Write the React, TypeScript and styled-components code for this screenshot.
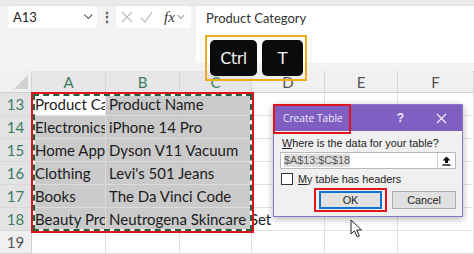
import React from 'react';
import styled, { createGlobalStyle } from 'styled-components';

const GlobalStyle = createGlobalStyle`
  html, body { margin: 0; padding: 0; }
  body {
    width: 474px;
    height: 254px;
    overflow: hidden;
    background: #f3f3f3;
    font-family: "Lato", "Liberation Sans", sans-serif;
  }
  * { box-sizing: border-box; }
`;

const GREEN = '#3b7d5e';
const RED = '#e0141c';

const colWidths = [32, 74, 74, 72, 73, 73, 76];
const colNames = ['A', 'B', 'C', 'D', 'E', 'F'];

const rows: [number, string, string][] = [
  [13, 'Product Category', 'Product Name'],
  [14, 'Electronics', 'iPhone 14 Pro'],
  [15, 'Home Appliances', 'Dyson V11 Vacuum'],
  [16, 'Clothing', "Levi's 501 Jeans"],
  [17, 'Books', 'The Da Vinci Code'],
  [18, 'Beauty Products', 'Neutrogena Skincare Set'],
  [19, '', ''],
];

const App: React.FC = () => {
  return (
    <Page>
      <GlobalStyle />
      <TopStrip />
      <Toolbar>
        <NameBox>
          <span>A13</span>
          <Chevron />
        </NameBox>
        <Dots>⋮</Dots>
        <FxBox>
          <svg width="12" height="12" viewBox="0 0 12 12">
            <path d="M1 1 L11 11 M11 1 L1 11" stroke="#bdbdbd" strokeWidth="1.3" fill="none" />
          </svg>
          <svg width="13" height="12" viewBox="0 0 13 12">
            <path d="M1 7 L5 11 L12 1" stroke="#bdbdbd" strokeWidth="1.3" fill="none" />
          </svg>
          <FxLabel>fx</FxLabel>
          <Chevron $small />
        </FxBox>
        <FormulaBox>Product Category</FormulaBox>
      </Toolbar>

      <Sheet>
        <Corner />
        {colNames.map((c, i) => (
          <ColHeader key={c} $sel={i < 3}>
            {c}
          </ColHeader>
        ))}
        {rows.map(([n, a, b]) => {
          const sel = n >= 13 && n <= 18;
          return (
            <React.Fragment key={n}>
              <RowHeader $sel={sel}>{n}</RowHeader>
              <Cell $sel={sel && n !== 13} $clip>
                {a}
              </Cell>
              <Cell $sel={sel} $noRight={!!b}>
                <CellText>{b}</CellText>
              </Cell>
              <Cell $sel={sel} $noRight={n === 18} />
              <Cell />
              <Cell />
              <Cell />
            </React.Fragment>
          );
        })}
        <AntsWhite />
        <AntsGreen />
        <RedFrame />
      </Sheet>

      <KeysBox>
        <Key $w={47}>Ctrl</Key>
        <Key $w={41}>T</Key>
      </KeysBox>

      <Dialog>
        <TitleBar>
          <TitleText>Create Table</TitleText>
          <TitleIcons>
            <span>?</span>
            <svg width="11" height="11" viewBox="0 0 11 11">
              <path d="M1 1 L10 10 M10 1 L1 10" stroke="#f2ecfb" strokeWidth="1.3" fill="none" />
            </svg>
          </TitleIcons>
          <TitleHighlight />
        </TitleBar>
        <DialogBody>
          <Label>
            <u>W</u>here is the data for your table?
          </Label>
          <RangeInput>
            <RangeText>$A$13:$C$18</RangeText>
            <PickButton>
              <svg width="9" height="10" viewBox="0 0 9 10">
                <path d="M4.5 0.5 L8.5 4.5 L6 4.5 L6 7 L3 7 L3 4.5 L0.5 4.5 Z" fill="#111" />
                <rect x="0.5" y="8.3" width="8" height="1.4" fill="#111" />
              </svg>
            </PickButton>
          </RangeInput>
          <CheckRow>
            <CheckBox />
            <span>
              <u>M</u>y table has headers
            </span>
          </CheckRow>
          <ButtonRow>
            <OkFrame>
              <Button $primary>OK</Button>
            </OkFrame>
            <Button>Cancel</Button>
          </ButtonRow>
        </DialogBody>
      </Dialog>

      <Cursor width="13" height="20" viewBox="0 0 13 20">
        <path
          d="M1 1 L1 15 L4.5 11.8 L7.2 18 L9.4 17 L6.8 11 L11.5 11 Z"
          fill="#fff"
          stroke="#222"
          strokeWidth="1"
          strokeLinejoin="round"
        />
      </Cursor>
    </Page>
  );
};

const Page = styled.div`
  position: relative;
  width: 474px;
  height: 254px;
  overflow: hidden;
  background: #f3f3f3;
`;

const TopStrip = styled.div`
  height: 6px;
  background: #e9e9e9;
  border-bottom: 1px solid #e2e2e2;
`;

const Toolbar = styled.div`
  display: flex;
  align-items: flex-start;
  height: 65px;
  padding-left: 8px;
`;

const NameBox = styled.div`
  width: 89px;
  height: 22px;
  background: #fff;
  border-radius: 4px;
  display: flex;
  align-items: center;
  justify-content: space-between;
  padding: 0 5px 0 5px;
  font-size: 13px;
  color: #222;
`;

const Chevron = styled.span<{ $small?: boolean }>`
  width: ${(p) => (p.$small ? 5 : 6)}px;
  height: ${(p) => (p.$small ? 5 : 6)}px;
  border-right: 1.3px solid ${(p) => (p.$small ? '#9a9a9a' : '#444')};
  border-bottom: 1.3px solid ${(p) => (p.$small ? '#9a9a9a' : '#444')};
  transform: rotate(45deg) translate(-2px, -1px);
`;

const Dots = styled.div`
  width: 19px;
  height: 22px;
  line-height: 22px;
  text-align: center;
  font-size: 14px;
  font-weight: 700;
  color: #555;
`;

const FxBox = styled.div`
  width: 75px;
  height: 22px;
  background: #fff;
  border-radius: 4px;
  display: flex;
  align-items: center;
  gap: 7px;
  padding-left: 5px;
`;

const FxLabel = styled.span`
  font-family: "Liberation Serif", "DejaVu Serif", serif;
  font-style: italic;
  font-size: 15px;
  color: #333;
  margin-left: 4px;
  margin-right: -3px;
`;

const FormulaBox = styled.div`
  flex: 1;
  height: 57px;
  margin-left: 5px;
  background: #fff;
  border-radius: 4px 0 0 4px;
  padding: 4px 0 0 10px;
  font-size: 13px;
  color: #333;
  line-height: 16px;
`;

const Sheet = styled.div`
  position: relative;
  display: grid;
  grid-template-columns: ${colWidths.map((w) => `${w}px`).join(' ')};
  grid-template-rows: 22px;
  grid-auto-rows: 23px;
  background: #fff;
`;

const Corner = styled.div`
  background: #f0f0f0;
  border-right: 1px solid #d4d4d4;
  border-bottom: 1px solid #cfcfcf;
  position: relative;
  &::after {
    content: '';
    position: absolute;
    right: 3px;
    bottom: 3px;
    width: 0;
    height: 0;
    border-left: 14px solid transparent;
    border-bottom: 14px solid #d2d2d2;
  }
`;

const ColHeader = styled.div<{ $sel?: boolean }>`
  background: ${(p) => (p.$sel ? '#e6e6e6' : '#f0f0f0')};
  border-right: 1px solid #d6d6d6;
  border-bottom: 1px solid #cfcfcf;
  text-align: center;
  font-size: 15px;
  line-height: 23px;
  color: ${(p) => (p.$sel ? GREEN : '#555')};
`;

const RowHeader = styled.div<{ $sel?: boolean }>`
  background: ${(p) => (p.$sel ? '#e3e3e3' : '#f0f0f0')};
  border-right: 1px solid #cfcfcf;
  border-bottom: 1px solid #d8d8d8;
  text-align: center;
  font-size: 15px;
  line-height: 23px;
  color: ${(p) => (p.$sel ? GREEN : '#555')};
`;

const Cell = styled.div<{ $sel?: boolean; $clip?: boolean; $noRight?: boolean }>`
  position: relative;
  background: ${(p) => (p.$sel ? '#cacaca' : '#fff')};
  border-right: 1px solid ${(p) => (p.$noRight ? 'transparent' : p.$sel ? '#dcdcdc' : '#e1e1e1')};
  border-bottom: 1px solid ${(p) => (p.$sel ? '#dcdcdc' : '#e1e1e1')};
  padding-left: 3px;
  font-size: 15px;
  line-height: 23px;
  color: #1c1c1c;
  white-space: nowrap;
  overflow: ${(p) => (p.$clip ? 'hidden' : 'visible')};
`;

const CellText = styled.span`
  position: relative;
  z-index: 1;
`;

const AntsWhite = styled.div`
  position: absolute;
  left: 33px;
  top: 23px;
  width: 219px;
  height: 137px;
  border: 2px solid #fff;
  pointer-events: none;
  z-index: 2;
`;

const AntsGreen = styled(AntsWhite)`
  border: 2px dashed #22613d;
  z-index: 3;
`;

const RedFrame = styled.div`
  position: absolute;
  left: 31px;
  top: 21px;
  width: 223px;
  height: 141px;
  border: 2.5px solid ${RED};
  pointer-events: none;
  z-index: 4;
`;

const KeysBox = styled.div`
  position: absolute;
  left: 205px;
  top: 35px;
  width: 102px;
  height: 46px;
  border: 2.5px solid #efaa1c;
  display: flex;
  align-items: center;
  gap: 5px;
  padding-left: 3px;
  z-index: 5;
`;

const Key = styled.div<{ $w: number }>`
  width: ${(p) => p.$w}px;
  height: 36px;
  background: #0b0b0b;
  border-radius: 5px;
  color: #f4f4f4;
  font-family: "DejaVu Sans", "Lato", sans-serif;
  font-size: 16px;
  display: flex;
  align-items: center;
  justify-content: center;
  letter-spacing: -0.5px;
`;

const Dialog = styled.div`
  position: absolute;
  left: 273px;
  top: 104px;
  width: 190px;
  height: 113px;
  background: #f0f0f0;
  border: 1px solid #8c74c6;
  box-shadow: 0 2px 7px rgba(0, 0, 0, 0.3);
  font-family: "Liberation Sans", "Noto Sans", sans-serif;
  font-size: 10.8px;
  color: #222;
  z-index: 6;
`;

const TitleBar = styled.div`
  position: relative;
  height: 26px;
  background: #7f60c2;
  display: flex;
  align-items: center;
  justify-content: space-between;
  padding: 0 15px 0 9px;
  color: #efe9fa;
`;

const TitleText = styled.span`
  font-family: "Open Sans", "Noto Sans", sans-serif;
  font-size: 10.2px;
`;

const TitleIcons = styled.div`
  display: flex;
  align-items: center;
  gap: 32px;
  font-size: 12px;
  font-weight: 700;
`;

const TitleHighlight = styled.div`
  position: absolute;
  left: -1px;
  top: -1px;
  width: 78px;
  height: 30px;
  border: 2.5px solid ${RED};
`;

const DialogBody = styled.div`
  padding: 5px 6px 0 6px;
`;

const Label = styled.div`
  line-height: 14px;
  padding-left: 2px;
`;

const RangeInput = styled.div`
  margin-top: 2px;
  height: 17px;
  background: #fff;
  border: 1px solid #b9b9b9;
  display: flex;
  align-items: center;
  justify-content: space-between;
  padding-left: 3px;
`;

const RangeText = styled.span`
  background: #dedede;
  color: #555;
  font-size: 10.8px;
  line-height: 13px;
`;

const PickButton = styled.div`
  width: 18px;
  height: 15px;
  border-left: 1px solid #d0d0d0;
  display: flex;
  align-items: center;
  justify-content: center;
`;

const CheckRow = styled.div`
  margin-top: 3px;
  display: flex;
  align-items: center;
  gap: 5px;
  padding-left: 1px;
  height: 14px;
`;

const CheckBox = styled.div`
  width: 12px;
  height: 12px;
  background: #fff;
  border: 1px solid #333;
`;

const ButtonRow = styled.div`
  margin-top: 2px;
  display: flex;
  justify-content: flex-end;
  align-items: center;
  gap: 5px;
`;

const OkFrame = styled.div`
  border: 2px solid ${RED};
  padding: 1px 3px;
`;

const Button = styled.div<{ $primary?: boolean }>`
  width: ${(p) => (p.$primary ? 63 : 64)}px;
  height: 18px;
  background: #e1e1e1;
  border: ${(p) => (p.$primary ? '2px solid #0a74d0' : '1px solid #adadad')};
  display: flex;
  align-items: center;
  justify-content: center;
  font-size: 10.8px;
`;

const Cursor = styled.svg`
  position: absolute;
  left: 350px;
  top: 219px;
  z-index: 7;
`;

export default App;
